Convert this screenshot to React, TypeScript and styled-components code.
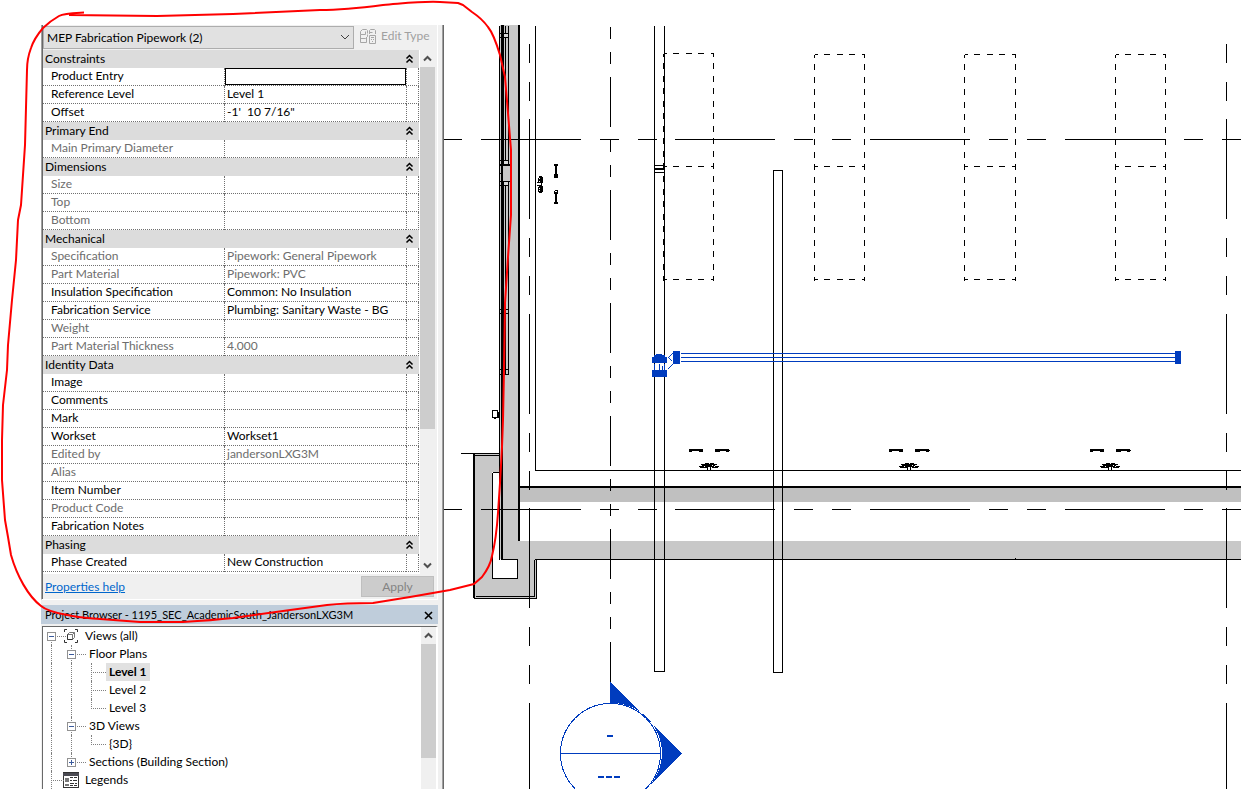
import React from "react";
import styled, { createGlobalStyle, css } from "styled-components";

const GlobalStyle = createGlobalStyle`
  *, *::before, *::after { box-sizing: border-box; }
  body {
    margin: 0;
    background: #fff;
    color: #000;
    font-family: Lato, "Open Sans", sans-serif;
    font-size: 12px;
    line-height: 16px;
  }
  button, input, select { font: inherit; color: inherit; }
`;

const Page = styled.div`
  position: relative;
  display: flex;
  height: 100vh;
  padding: 25px 0 0 41px;
  overflow: hidden;
`;

const Sidebar = styled.aside`
  flex: none;
  display: grid;
  grid-template-rows: minmax(0, 1fr) 184px;
  gap: 5px;
  width: 403px;
  padding-right: 5px;
  background: #f0f0f0;
  border-right: 1px solid #696969;
  box-shadow: inset -1px 0 #a0a0a0;
`;

const Properties = styled.section`
  display: flex;
  flex-direction: column;
  min-height: 0;
  border-left: 1px solid #a0a0a0;
  border-right: 1px solid #fff;
  border-bottom: 1px solid #fff;
  box-shadow: inset 1px 0 #696969;
  padding-left: 1px;
`;

const TypeBar = styled.div`
  display: flex;
  align-items: flex-start;
  gap: 6px;
  height: 25px;
  padding-top: 1px;
`;

const SelectBox = styled.div`
  position: relative;
  width: 311px;

  svg {
    position: absolute;
    right: 4px;
    top: 8px;
    pointer-events: none;
  }
`;

const TypeSelect = styled.select`
  appearance: none;
  display: block;
  width: 100%;
  height: 23px;
  padding: 0 20px 0 3px;
  border: 1px solid #adadad;
  border-radius: 0;
  background: #e1e1e1;
`;

const EditType = styled.button`
  display: flex;
  align-items: center;
  gap: 4px;
  height: 20px;
  padding: 0;
  border: 0;
  background: none;
  color: #a0a0a0;
  white-space: nowrap;
`;

const GridArea = styled.div`
  flex: 1;
  display: flex;
  gap: 1px;
  min-height: 0;
  background: linear-gradient(to right, #fff 377px, #f0f0f0 377px);
`;

const GridClip = styled.div`
  width: 376px;
  overflow: hidden;
`;

const Table = styled.table`
  width: 100%;
  table-layout: fixed;
  border-collapse: separate;
  border-spacing: 0;

  td, th { height: 18px; padding: 0; font-weight: 400; text-align: left; white-space: nowrap; }
`;

const CategoryCell = styled.th`
  background: #dcdcdc;
`;

const CategoryBar = styled.div`
  display: flex;
  align-items: center;
  justify-content: space-between;
  height: 18px;
  padding: 0 5px 0 2px;
`;

const CollapseButton = styled.button`
  display: flex;
  padding: 0;
  border: 0;
  background: none;
`;

const dotted = "1px dotted #707070";

const LabelCell = styled.th<{ $muted?: boolean }>`
  border-bottom: ${dotted};
  color: ${(p) => (p.$muted ? "#6d6d6d" : "#000")};

  div { height: 17px; padding-left: 8px; }
`;

const ValueCell = styled.td<{ $muted?: boolean }>`
  border-left: ${dotted};
  border-bottom: ${dotted};
  color: ${(p) => (p.$muted ? "#6d6d6d" : "#000")};

  div { height: 17px; padding-left: 2px; white-space: pre; }
`;

const EndCell = styled.td`
  border: ${dotted};
  border-top: 0;
`;

const ValueInput = styled.input`
  display: block;
  width: 100%;
  height: 17px;
  padding: 0 2px;
  border: 1px solid #000;
  outline: 0;
  background: #fff;
`;

const Scrollbar = styled.div`
  display: flex;
  flex-direction: column;
  flex: none;
  width: 15px;
  background: #f0f0f0;
`;

const ScrollArrow = styled.button`
  display: flex;
  flex: none;
  align-items: center;
  justify-content: center;
  height: 17px;
  padding: 0;
  border: 0;
  background: none;
`;

const Thumb = styled.div<{ $share: number }>`
  flex: ${(p) => p.$share} 1 0;
  background: #cdcdcd;
`;

const Rest = styled.div<{ $share: number }>`
  flex: ${(p) => p.$share} 1 0;
`;

const Footer = styled.footer`
  display: flex;
  flex: none;
  align-items: center;
  justify-content: space-between;
  height: 25px;
  padding: 0 3px 0 2px;
`;

const HelpLink = styled.a`
  color: #0066cc;
  text-decoration: underline;
`;

const ApplyButton = styled.button`
  width: 73px;
  height: 21px;
  padding: 0;
  border: 1px solid #bfbfbf;
  background: #cccccc;
  color: #838383;
`;

const Browser = styled.section`
  display: flex;
  flex-direction: column;
  min-height: 0;
`;

const BrowserTitle = styled.header`
  display: flex;
  flex: none;
  align-items: center;
  justify-content: space-between;
  height: 19px;
  margin: 0 0 2px;
  padding: 1px 5px 0 4px;
  background: #bfcddb;

  h2 { margin: 0; font-size: 11px; font-weight: 400; white-space: nowrap; }
`;

const CloseButton = styled.button`
  display: flex;
  padding: 0;
  border: 0;
  background: none;
`;

const TreeFrame = styled.div`
  flex: 1;
  display: flex;
  min-height: 0;
  overflow: hidden;
  border-top: 1px solid #696969;
  border-left: 1px solid #696969;
  border-right: 2px solid #fff;
  margin-left: 1px;
  background: #fff;
`;

const Tree = styled.ul`
  flex: 1;
  margin: 0;
  padding: 0;
  list-style: none;
`;

const TreeRow = styled.li`
  display: flex;
  align-items: center;
  height: 18px;
`;

const treeLine = "1px dotted #808080";

const Guide = styled.span<{ $down?: boolean; $up?: boolean; $across?: boolean }>`
  position: relative;
  flex: none;
  width: 20px;
  height: 18px;

  ${(p) =>
    (p.$up || p.$down) &&
    css`
      &::before {
        content: "";
        position: absolute;
        left: 8px;
        top: ${p.$up ? 0 : "9px"};
        bottom: ${p.$down ? 0 : "8px"};
        border-left: ${treeLine};
      }
    `}

  ${(p) =>
    p.$across &&
    css`
      &::after {
        content: "";
        position: absolute;
        left: 8px;
        right: -3px;
        top: 9px;
        border-top: ${treeLine};
      }
    `}
`;

const Expander = styled.button`
  position: absolute;
  z-index: 1;
  left: 4px;
  top: 5px;
  display: flex;
  padding: 0;
  border: 0;
  background: #fff;
`;

const TreeLabel = styled.span<{ $current?: boolean }>`
  height: 18px;
  line-height: 18px;
  margin-left: 3px;
  padding: 0 3px;
  background: ${(p) => (p.$current ? "#e1e1e1" : "none")};
  font-weight: ${(p) => (p.$current ? 700 : 400)};
`;

const Canvas = styled.main`
  flex: 1;
  min-width: 0;

  svg { display: block; width: 100%; height: 100%; }
`;

const Markup = styled.svg`
  position: absolute;
  left: 0;
  top: 0;
  width: 520px;
  height: 630px;
  pointer-events: none;
`;

type Row = { label: string; value?: string; muted?: boolean; editing?: boolean };
type Category = { name: string; rows: Row[] };

const categories: Category[] = [
  {
    name: "Constraints",
    rows: [
      { label: "Product Entry", editing: true },
      { label: "Reference Level", value: "Level 1" },
      { label: "Offset", value: "-1'  10 7/16\"" },
    ],
  },
  { name: "Primary End", rows: [{ label: "Main Primary Diameter", muted: true }] },
  {
    name: "Dimensions",
    rows: [
      { label: "Size", muted: true },
      { label: "Top", muted: true },
      { label: "Bottom", muted: true },
    ],
  },
  {
    name: "Mechanical",
    rows: [
      { label: "Specification", value: "Pipework: General Pipework", muted: true },
      { label: "Part Material", value: "Pipework: PVC", muted: true },
      { label: "Insulation Specification", value: "Common: No Insulation" },
      { label: "Fabrication Service", value: "Plumbing: Sanitary Waste - BG" },
      { label: "Weight", muted: true },
      { label: "Part Material Thickness", value: "4.000", muted: true },
    ],
  },
  {
    name: "Identity Data",
    rows: [
      { label: "Image" },
      { label: "Comments" },
      { label: "Mark" },
      { label: "Workset", value: "Workset1" },
      { label: "Edited by", value: "jandersonLXG3M", muted: true },
      { label: "Alias", muted: true },
      { label: "Item Number" },
      { label: "Product Code", muted: true },
      { label: "Fabrication Notes" },
    ],
  },
  { name: "Phasing", rows: [{ label: "Phase Created", value: "New Construction" }] },
];

type Node = {
  label: string;
  depth: number;
  state?: "open" | "closed";
  last?: boolean;
  icon?: "views" | "legends";
  current?: boolean;
};

const nodes: Node[] = [
  { label: "Views (all)", depth: 0, state: "open", icon: "views" },
  { label: "Floor Plans", depth: 1, state: "open" },
  { label: "Level 1", depth: 2, current: true },
  { label: "Level 2", depth: 2 },
  { label: "Level 3", depth: 2, last: true },
  { label: "3D Views", depth: 1, state: "open" },
  { label: "{3D}", depth: 2, last: true },
  { label: "Sections (Building Section)", depth: 1, state: "closed", last: true },
  { label: "Legends", depth: 0, icon: "legends" },
];

const Collapse = () => (
  <svg width="9" height="10" viewBox="0 0 9 10" fill="none" stroke="#000" strokeWidth="1.5">
    <path d="M1.5 4.5l3-3 3 3M1.5 8.5l3-3 3 3" />
  </svg>
);

const Arrow = ({ down }: { down?: boolean }) => (
  <svg width="9" height="7" viewBox="0 0 9 7" fill="none" stroke="#505050" strokeWidth="2">
    <path d={down ? "M1 1.5l3.5 3.5l3.5-3.5" : "M1 5.5l3.5-3.5l3.5 3.5"} />
  </svg>
);

const TypeIcon = () => (
  <svg width="17" height="17" viewBox="0 0 17 17" fill="none" stroke="#a6a6a6">
    <path d="M.5 3.5l2-2h4l1 1v3M.5 3.5v3h5v-3M9.500 6V2.500l1-1h4l1 1V6M9.500 4.500h3M.5 6.500v8h6v-5M.5 10.500h5l2-2v-2" />
    <path d="M9.500 7.500h6v8h-6zM11 9.500h3M11 11.500h1M13 11.500h1M12 13.500h1" />
  </svg>
);

const ViewsIcon = () => (
  <svg width="16" height="16" viewBox="0 0 16 16" fill="none" stroke="#333">
    <path d="M4 1.500H1.500V4M12 1.500h2.500V4M4 14.500H1.500V12M12 14.500h2.500V12" />
    <path d="M4.500 6.500l2-2h5v5l-2 2h-5zM4.500 6.500h5v5M9.500 6.500l2-2" stroke="#777" />
    <path d="M4.500 6.500v5h5" />
  </svg>
);

const LegendsIcon = () => (
  <svg width="16" height="16" viewBox="0 0 16 16" fill="none" stroke="#333" shapeRendering="crispEdges">
    <path d="M.5 .5h15v15H.5z" fill="#fff" />
    <path d="M0 2h16" strokeWidth="3" stroke="#4a4a52" />
    <path d="M2 6.500h4M2 8.500h4M2 12.500h4" strokeWidth="2" stroke="#777" />
    <path d="M7 5.500h3M11 5.500h3M7 8.500h2M10 8.500h4M7 11.500h4M12 11.500h2M7 13.500h3M11 13.500h3" />
  </svg>
);

const BoxIcon = ({ plus }: { plus?: boolean }) => (
  <svg width="9" height="9" viewBox="0 0 9 9" fill="#fff" shapeRendering="crispEdges">
    <rect x=".5" y=".5" width="8" height="8" stroke="#919191" />
    <path d={plus ? "M2 4.500h5M4.500 2v5" : "M2 4.500h5"} stroke="#3a5a9c" />
  </svg>
);

function TreeItem({ node }: { node: Node }) {
  const guides = [];
  for (let level = 0; level <= node.depth; level++) {
    const own = level === node.depth;
    guides.push(
      <Guide
        key={level}
        $up={!own || node.label !== "Views (all)"}
        $down={!own || !node.last}
        $across={own}
      >
        {own && node.state && (
          <Expander aria-label={`Toggle ${node.label}`}>
            <BoxIcon plus={node.state === "closed"} />
          </Expander>
        )}
      </Guide>
    );
  }
  return (
    <TreeRow>
      {guides}
      {node.icon === "views" && <ViewsIcon />}
      {node.icon === "legends" && <LegendsIcon />}
      <TreeLabel $current={node.current}>{node.label}</TreeLabel>
    </TreeRow>
  );
}

const gridDash = "100 19 19 19 19 18.600";

function DashedBay({ x, y, width }: { x: number; y: number; width: number }) {
  const right = x + width;
  return (
    <g strokeDasharray="6 6.550" strokeDashoffset="3">
      <path d={`M${x} ${y}H${right}`} />
      <path d={`M${x} 166H${right}`} />
      <path d={`M${x} 279H${right}`} />
      <path d={`M${x} ${y}V280`} />
      <path d={`M${right} ${y}V280`} />
    </g>
  );
}

function Fixture({ x }: { x: number }) {
  return (
    <g transform={`translate(${x} 0)`} stroke="none" fill="#000">
      <path d="M689 449h14v3h-4v-1h-7v1h-3zM715 449h14v1h1v1h-1v1h-3v-1h-6v1h-5z" />
      <path d="M705 463h4v1h1v-1h4v1h3v1h-2v1h4v1h-1v1h-6v-1h-5v1h-7v-1h-1v-1h3v-1h-1v-1h4zM707 467h1v3h-1zM710 467h1v3h-1z" />
      <path d="M704 466h1v1h-1zM712 465h1v1h-1zM714 466h1v1h-1z" fill="#fff" />
    </g>
  );
}

/* Plan view; coordinates are page pixels, shifted to the canvas origin. */
function FloorPlan() {
  return (
    <svg role="img" aria-label="Floor plan" shapeRendering="crispEdges">
      <g transform="translate(-444 -25)">
        <g>
          <path d="M500 25h18v534h-18z" fill="#c8c8c8" />
          <path d="M473 453h27v145h-27zM500 559h36v39h-36z" fill="#c8c8c8" />
          <path d="M492 472h8v87h18v20h-26z" fill="#fff" />
          <path d="M520 488h2000v14h-2000z" fill="#c0c0c0" />
          <path d="M518 541h2000v18h-2000z" fill="#c8c8c8" />
          <path d="M501 25h3v349h-3zM501 374h2v185h-2zM518 25h2v516h-2zM518 486h2000v2h-2000zM473 453h2v145h-2z" />
          <path d="M504 165h7v16h-8v-16z" fill="#c8c8c8" />
          <path d="M504 34h4v3h-4zM504 161h4v3h-4zM504 182h4v3h-4z" fill="#d8d8d8" />
        </g>

        <g transform="translate(.5 .5)" fill="none" stroke="#000">
          <path d="M499 25V559M505 25V33M505 37V160M508 25V165M505 185V374M508 181V374M511 165V181" />
          <path d="M499 33H508M499 37H508M499 160H508M499 164H511M499 165H511M499 173H502M499 181H511M499 185H508M499 309H508M499 313H508M499 369H508M499 374H508" />
          <path d="M460 453H499M474 455H499M492 472H499M492 472V578H517V559H500M475 596H534V559M473 598H536V559M534 559H2500M1015 557V559" />
          <path d="M492 410H497V417H492ZM498 411V417M493 418H495" />
          <path d="M535 25V470H2500" />

          <g strokeDasharray={gridDash}>
            <path d="M529 -76V2000M1226 -76V2000" />
            <path d="M285.600 139H2500M285.600 509H2500" />
          </g>
          <path d="M610 -37V683" strokeDasharray="50 13 12 13 12 13" />

          <path d="M654 25V671H664V25M773 170H782V672H773Z" />
          <path d="M654 165H664M654 168H664M654 169H664M654 172H664" />

          <DashedBay x={663} y={53} width={50} />
          <DashedBay x={814} y={54} width={50} />
          <DashedBay x={964} y={54} width={51} />
          <DashedBay x={1115} y={54} width={50} />

          <path d="M536 182H541V185H536" />
        </g>

        <path d="M539 176h3v1h1v6h-3v-1h-2v-4h1zM538 187h1v-1h4v6h-1v1h-3v-1h-1zM554 164h4v2h-1v8h1v4h-4v-4h1v-8h-1zM554 191h1v-1h3v4h-1v8h1v2h-4v-2h1v-8h-1z" />
        <path d="M539 178h1v1h-1zM539 181h1v1h-1zM539 188h1v1h-1zM539 190h1v1h-1zM555 191h2v1h-2z" fill="#fff" />
        <Fixture x={0} />
        <Fixture x={200} />
        <Fixture x={401} />

        <g fill="#003cbe">
          <path d="M656 354h6v1h3v2h2v6h-15v-6h2v-2h2zM652 370h15v7h-15zM673 351h7v13h-7zM1175 351h6v13h-6z" />
          <path d="M610 682L682 753.500L646 789.500A50 50 0 0 0 610 703z" />
        </g>
        <circle cx="610.500" cy="753.500" r="50" fill="#fff" stroke="#003cbe" />
        <path d="M610.500 683V703" stroke="#003cbe" />
        <g transform="translate(.5 .5)" fill="none" stroke="#003cbe">
          <path d="M680 353H1175M680 357H1175M680 361H1175M654 363V370M659 363V370M662 365V370M664 363V370M667 358L672 353M668 357L672 361M667 369L673 363M560 753H660" />
        </g>
        <path d="M607 735h6v2h-6zM598 776h6v2h-6zM606 776h6v2h-6zM614 776h6v2h-6z" fill="#003cbe" />
      </g>
    </svg>
  );
}

const revisionCloud =
  "M84 12.500C72 13 64 13 59 16C52 20 46 25 43 28C37 35 33 42 31 48C28 56 27 60 27 70L25 145L21 205L18 220L16 260L12 300L8 345L7 370L3 405L2 440L2 480L5 520L8 537L11 555C17 576 28 596 41 606C47 611 56 613 67 615C80 618 88 618 100 619L140 622H183C200 621 215 620 233 618L283 611L327 605C345 603 358 603 373 603L410 597L450 590L474 584L482 577C488 569 491 562 492 556C496 540 497 528 498 513L500 483L502 447L503 420L504 370L505 303L508 257L511 215V150L508 113L505 77L500 55C497 45 493 33 488 27C483 20 478 16 472 12L463 5L458 3L440 2C424 1 408 3 383 5C360 8 340 10 320 10L233 14L157 16L69 15";

export default function App() {
  return (
    <Page>
      <GlobalStyle />
      <Sidebar>
        <Properties aria-label="Properties">
          <TypeBar>
            <SelectBox>
              <TypeSelect aria-label="Element type">
                <option>MEP Fabrication Pipework (2)</option>
              </TypeSelect>
              <svg width="10" height="7" viewBox="0 0 10 7" fill="none" stroke="#404040">
                <path d="M1 1l4 4l4-4" />
              </svg>
            </SelectBox>
            <EditType disabled>
              <TypeIcon />
              Edit Type
            </EditType>
          </TypeBar>

          <GridArea>
            <GridClip>
              <Table>
                <colgroup>
                  <col style={{ width: 181 }} />
                  <col />
                  <col style={{ width: 13 }} />
                </colgroup>
                {categories.map((category) => (
                  <tbody key={category.name}>
                    <tr>
                      <CategoryCell colSpan={3} scope="rowgroup">
                        <CategoryBar>
                          {category.name}
                          <CollapseButton aria-label={`Collapse ${category.name}`}>
                            <Collapse />
                          </CollapseButton>
                        </CategoryBar>
                      </CategoryCell>
                    </tr>
                    {category.rows.map((row) => (
                      <tr key={row.label}>
                        <LabelCell scope="row" $muted={row.muted}>
                          <div>{row.label}</div>
                        </LabelCell>
                        <ValueCell $muted={row.muted}>
                          {row.editing ? (
                            <ValueInput aria-label={row.label} />
                          ) : (
                            <div>{row.value}</div>
                          )}
                        </ValueCell>
                        <EndCell />
                      </tr>
                    ))}
                  </tbody>
                ))}
              </Table>
            </GridClip>
            <Scrollbar>
              <ScrollArrow aria-label="Scroll properties up">
                <Arrow />
              </ScrollArrow>
              <Thumb $share={17} />
              <Rest $share={6} />
              <ScrollArrow aria-label="Scroll properties down">
                <Arrow down />
              </ScrollArrow>
            </Scrollbar>
          </GridArea>

          <Footer>
            <HelpLink href="#help">Properties help</HelpLink>
            <ApplyButton disabled>Apply</ApplyButton>
          </Footer>
        </Properties>

        <Browser>
          <BrowserTitle>
            <h2>Project Browser - 1195_SEC_AcademicSouth_JandersonLXG3M</h2>
            <CloseButton aria-label="Close project browser">
              <svg width="9" height="9" viewBox="0 0 9 9" stroke="#000" strokeWidth="1.600">
                <path d="M1 1l7 7M8 1l-7 7" />
              </svg>
            </CloseButton>
          </BrowserTitle>
          <TreeFrame>
            <Tree>
              {nodes.map((node) => (
                <TreeItem key={node.label} node={node} />
              ))}
            </Tree>
            <Scrollbar>
              <ScrollArrow aria-label="Scroll browser up">
                <Arrow />
              </ScrollArrow>
              <Thumb $share={11} />
              <Rest $share={3} />
            </Scrollbar>
          </TreeFrame>
        </Browser>
      </Sidebar>

      <Canvas>
        <FloorPlan />
      </Canvas>

      <Markup viewBox="0 0 520 630" fill="none" stroke="#f00" strokeWidth="2" aria-hidden="true">
        <path d={revisionCloud} strokeLinejoin="round" />
      </Markup>
    </Page>
  );
}
